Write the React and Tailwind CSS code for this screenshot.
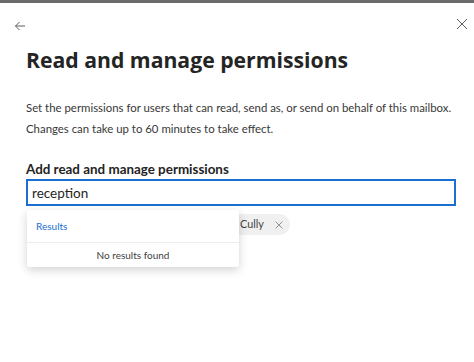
import { useState } from "react";

function BackArrow() {
  return (
    <svg width="12" height="12" viewBox="0 0 12 12" fill="none" stroke="#5c5c5c" strokeWidth="1">
      <path d="M11 6H1.5M5.5 2L1.5 6l4 4" />
    </svg>
  );
}

function CloseIcon({ size = 12, color = "#5c5c5c" }) {
  return (
    <svg width={size} height={size} viewBox="0 0 12 12" fill="none" stroke={color} strokeWidth="1">
      <path d="M1 1l10 10M11 1L1 11" />
    </svg>
  );
}

export default function App() {
  const [query, setQuery] = useState("reception");

  return (
    <div
      className="w-[474px] h-[362px] bg-white border-t-[3px] border-[#6b6b6b] overflow-hidden"
      style={{ fontFamily: 'Lato, "Open Sans", sans-serif' }}
    >
      <div className="flex items-start justify-between pl-[14px] pr-[6px] pt-[15px]">
        <button className="w-[12px] h-[12px] mt-[2px] flex items-center">
          <BackArrow />
        </button>
        <button className="w-[12px] h-[12px] flex items-center">
          <CloseIcon />
        </button>
      </div>

      <div className="px-[26px]">
        <h1
          className="mt-[13px] text-[21.2px] leading-[30px] font-bold text-[#242424]"
          style={{ fontFamily: '"Open Sans", sans-serif' }}
        >
          Read and manage permissions
        </h1>

        <p className="mt-[22px] text-[11.4px] leading-[21px] text-[#383838] whitespace-nowrap">
          <span className="block">
            Set the permissions for users that can read, send as, or send on behalf of this mailbox.
          </span>
          <span className="block">Changes can take up to 60 minutes to take effect.</span>
        </p>

        <label className="block mt-[21px] text-[13.4px] leading-[18px] font-bold text-[#242424]">
          Add read and manage permissions
        </label>

        <div className="relative mt-[1px] w-[430px]">
          <input
            value={query}
            onChange={(e) => setQuery(e.target.value)}
            className="w-full h-[27px] border-2 border-[#1a6fd0] px-[4px] text-[13.5px] text-[#242424] outline-none"
          />

          <div className="absolute left-[1px] top-[31px] w-[212px] bg-white z-10 shadow-[0_3px_10px_rgba(0,0,0,0.18)] rounded-[2px]">
            <div className="h-[32px] flex items-center px-[9px] text-[10px] text-[#1a6fd0]">
              Results
            </div>
            <div className="border-t border-[#ececec] h-[25px] flex items-center justify-center text-[10px] text-[#424242]">
              No results found
            </div>
          </div>

          <div className="mt-[8px] ml-[174px] inline-flex items-center gap-[11px] h-[21px] rounded-full bg-[#f0f0f0] pl-[40px] pr-[7px] text-[10.8px] text-[#424242]">
            <span>Cully</span>
            <CloseIcon size={8} color="#616161" />
          </div>
        </div>
      </div>
    </div>
  );
}
